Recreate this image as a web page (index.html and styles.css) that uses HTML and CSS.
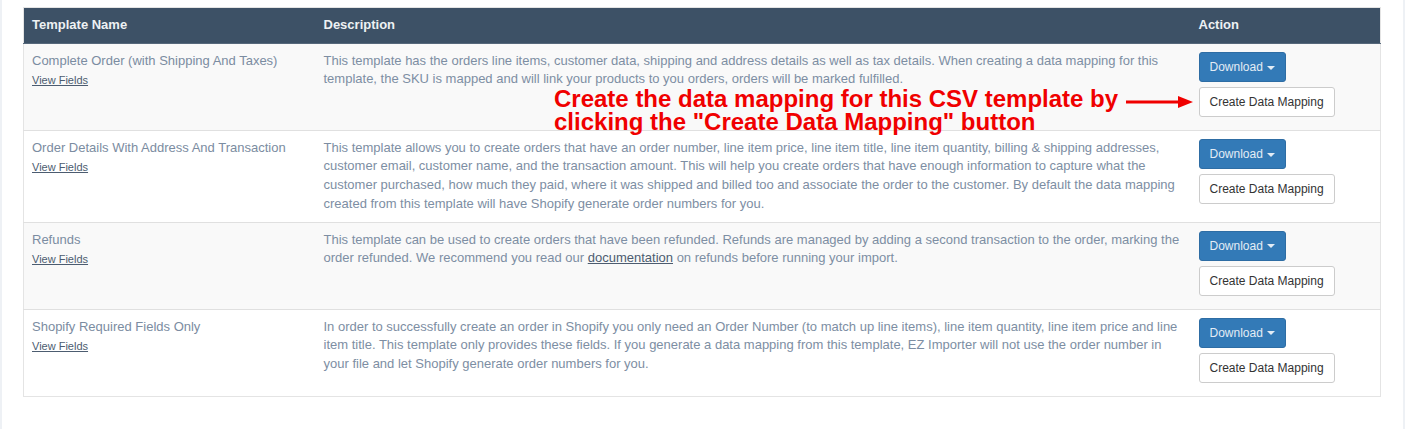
FILE: index.html
```html
<!DOCTYPE html>
<html>
<head>
<meta charset="utf-8">
<link rel="stylesheet" href="styles.css">
</head>
<body>
<div class="panel">
  <table class="tpl">
    <colgroup>
      <col class="c-name">
      <col class="c-desc">
      <col class="c-act">
    </colgroup>
    <thead>
      <tr><th>Template Name</th><th>Description</th><th>Action</th></tr>
    </thead>
    <tbody>
      <tr class="odd">
        <td><div class="name">Complete Order (with Shipping And Taxes)</div><a class="vf" href="#">View Fields</a></td>
        <td class="desc">This template has the orders line items, customer data, shipping and address details as well as tax details. When creating a data mapping for this template, the SKU is mapped and will link your products to you orders, orders will be marked fulfilled.</td>
        <td><div class="btn btn-primary">Download <span class="caret"></span></div><div class="btn btn-default">Create Data Mapping</div></td>
      </tr>
      <tr>
        <td><div class="name">Order Details With Address And Transaction</div><a class="vf" href="#">View Fields</a></td>
        <td class="desc">This template allows you to create orders that have an order number, line item price, line item title, line item quantity, billing &amp; shipping addresses, customer email, customer name, and the transaction amount. This will help you create orders that have enough information to capture what the customer purchased, how much they paid, where it was shipped and billed too and associate the order to the customer. By default the data mapping created from this template will have Shopify generate order numbers for you.</td>
        <td><div class="btn btn-primary">Download <span class="caret"></span></div><div class="btn btn-default">Create Data Mapping</div></td>
      </tr>
      <tr class="odd">
        <td><div class="name">Refunds</div><a class="vf" href="#">View Fields</a></td>
        <td class="desc">This template can be used to create orders that have been refunded. Refunds are managed by adding a second transaction to the order, marking the order refunded. We recommend you read our <a class="doc" href="#">documentation</a> on refunds before running your import.</td>
        <td><div class="btn btn-primary">Download <span class="caret"></span></div><div class="btn btn-default">Create Data Mapping</div></td>
      </tr>
      <tr>
        <td><div class="name">Shopify Required Fields Only</div><a class="vf" href="#">View Fields</a></td>
        <td class="desc">In order to successfully create an order in Shopify you only need an Order Number (to match up line items), line item quantity, line item price and line item title. This template only provides these fields. If you generate a data mapping from this template, EZ Importer will not use the order number in your file and let Shopify generate order numbers for you.</td>
        <td><div class="btn btn-primary">Download <span class="caret"></span></div><div class="btn btn-default">Create Data Mapping</div></td>
      </tr>
    </tbody>
  </table>
  <div class="note">
    <div class="note-text">Create the data mapping for this CSV template by<br>clicking the "Create Data Mapping" button</div>
    <svg class="arrow" width="70" height="14" viewBox="0 0 70 14"><line x1="0" y1="7" x2="56" y2="7" stroke="#f00000" stroke-width="3"/><polygon points="52,1 67,7 52,13" fill="#f00000"/></svg>
  </div>
</div>
</body>
</html>
```

FILE: styles.css
```css
html, body {
  margin: 0;
  padding: 0;
  background: #eef1f5;
  height: 100%;
}
.panel {
  position: relative;
  margin: 0 2px;
  background: #fff;
  padding: 7px 22px 0 21px;
  min-height: 429px;
  box-sizing: border-box;
  font-family: "Liberation Sans", Arial, Helvetica, sans-serif;
}
.tpl {
  width: 100%;
  border-collapse: collapse;
  border: 1px solid #e4e4e4;
  font-size: 13px;
  line-height: 18.7px;
  table-layout: fixed;
}
.c-name { width: 292px; }
.c-act { width: 190px; }
.tpl th {
  background: #3d5166;
  color: #eef1f4;
  font-weight: bold;
  text-align: left;
  padding: 8px;
  border-bottom: 1px solid #56687b;
}
.tpl td {
  padding: 8px 8px 8px 8px;
  vertical-align: top;
  border-top: 1px solid #e0e0e0;
  color: #7d8ea3;
}
.tpl tr.odd td { background: #f9f9f9; }
.name { color: #7b8ca1; }
.vf {
  display: inline-block;
  margin-top: 2px;
  font-size: 11px;
  line-height: 16px;
  color: #4c5c70;
  text-decoration: underline;
}
.desc { color: #8292a6; }
.doc { color: #4c5c70; text-decoration: underline; }
.btn {
  display: block;
  width: fit-content;
  box-sizing: border-box;
  height: 30px;
  padding: 5px 10px;
  font-size: 12px;
  line-height: 18px;
  border-radius: 3px;
  border: 1px solid transparent;
  margin-bottom: 5px;
  white-space: nowrap;
}
.btn-primary {
  background: #337ab7;
  border-color: #2e6da4;
  color: #e3ecf5;
}
.btn-default {
  background: #fff;
  border-color: #ccc;
  color: #333;
}
.caret {
  display: inline-block;
  width: 0;
  height: 0;
  margin-left: 1px;
  vertical-align: middle;
  border-top: 4px solid #e3ecf5;
  border-left: 4px solid transparent;
  border-right: 4px solid transparent;
}
.note {
  position: absolute;
  left: 552px;
  top: 87px;
  display: flex;
  align-items: flex-start;
}
.note-text {
  font-family: "Liberation Sans Narrow", "Liberation Sans", Arial, sans-serif;
  font-weight: bold;
  font-size: 24px;
  line-height: 23px;
  color: #f00000;
  white-space: nowrap;
}
.arrow {
  margin-left: 8px;
  margin-top: 8px;
}
```
